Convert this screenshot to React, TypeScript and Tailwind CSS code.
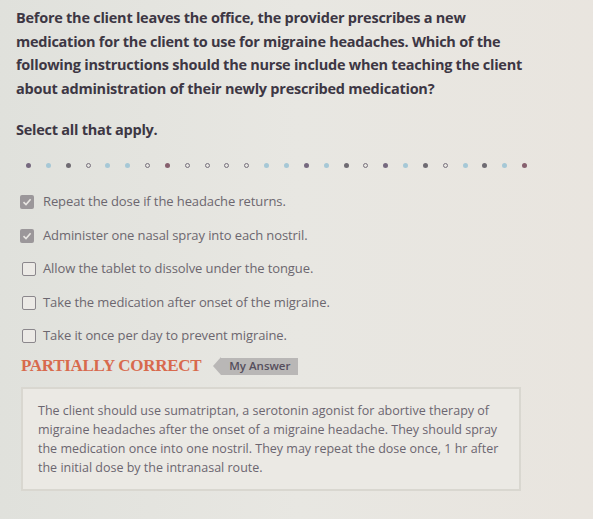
import React from "react";

const dots = [
  "fill-p", "blue", "fill-g", "ring", "blue", "blue", "ring", "fill-r", "ring", "ring",
  "ring", "ring", "blue", "blue", "fill-p", "blue", "fill-g", "ring", "fill-p", "blue",
  "fill-g", "ring", "blue", "fill-g", "blue", "fill-r",
];

const options = [
  { text: "Repeat the dose if the headache returns.", checked: true },
  { text: "Administer one nasal spray into each nostril.", checked: true },
  { text: "Allow the tablet to dissolve under the tongue.", checked: false },
  { text: "Take the medication after onset of the migraine.", checked: false },
  { text: "Take it once per day to prevent migraine.", checked: false },
];

const Dot = ({ kind }: { kind: string }) => {
  if (kind === "blue") return <span className="w-[5px] h-[5px] rounded-full bg-[#a6c8d6]"></span>;
  if (kind === "ring") return <span className="w-[5px] h-[5px] rounded-full border-[1.5px] border-[#77707c]"></span>;
  if (kind === "fill-r") return <span className="w-[5px] h-[5px] rounded-full bg-[#86606e]"></span>;
  if (kind === "fill-p") return <span className="w-[5px] h-[5px] rounded-full bg-[#76697f]"></span>;
  return <span className="w-[5px] h-[5px] rounded-full bg-[#6f6b72]"></span>;
};

const App = () => {
  return (
    <div
      className="w-[593px] h-[519px] overflow-hidden bg-gradient-to-r from-[#e0e1dc] via-[#e8e7e2] to-[#e9e5df]"
      style={{ fontFamily: '"Open Sans", "Liberation Sans", sans-serif' }}
    >
      <div className="pl-4 pt-[6px]">
        <p className="text-[14.5px] leading-[23.5px] font-bold tracking-[-0.25px] text-[#3d3744] whitespace-nowrap">
          Before the client leaves the office, the provider prescribes a new
          <br />
          medication for the client to use for migraine headaches. Which of the
          <br />
          following instructions should the nurse include when teaching the client
          <br />
          about administration of their newly prescribed medication?
        </p>
        <p className="mt-[18px] text-[14.5px] leading-[23px] font-bold tracking-[-0.25px] text-[#3d3744]">Select all that apply.</p>
      </div>

      <div className="flex items-center gap-[14.85px] pl-[26px] mt-[19px] h-[10px]">
        {dots.map((d, i) => (
          <Dot key={i} kind={d} />
        ))}
      </div>

      <div className="flex flex-col pl-[20px] mt-[23px] gap-[15.5px]">
        {options.map((o, i) => (
          <div key={i} className="flex items-center gap-[9px] h-[18px]">
            {o.checked ? (
              <span className="w-[14px] h-[14px] rounded-[2px] bg-[#9b979a] flex items-center justify-center">
                <svg width="10" height="10" viewBox="0 0 10 10">
                  <path d="M1.5 5.2 L4 7.6 L8.6 2.3" stroke="#e8e6e2" strokeWidth="1.6" fill="none" />
                </svg>
              </span>
            ) : (
              <span className="w-[14px] h-[14px] rounded-[2px] border border-[#8b878c] bg-[#eceae6] ml-[2px]"></span>
            )}
            <span className={`text-[13px] tracking-[-0.1px] text-[#6c676f] ${o.checked ? "" : "ml-[-2px]"}`}>{o.text}</span>
          </div>
        ))}
      </div>

      <div className="flex items-center pl-[21px] mt-[11px] h-[20px]">
        <span
          className="text-[17px] font-bold text-[#d86a4d] tracking-[-0.3px]"
          style={{ fontFamily: '"Liberation Serif", serif' }}
        >
          PARTIALLY CORRECT
        </span>
        <div className="flex items-center ml-[12px]">
          <svg width="8" height="18" viewBox="0 0 8 18">
            <path d="M8 0 L0 9 L8 18 Z" fill="#b9b7b6" />
          </svg>
          <span className="bg-[#b9b7b6] h-[17px] px-[8px] flex items-center text-[11.5px] font-semibold text-[#554e5c]">
            My Answer
          </span>
        </div>
      </div>

      <div className="ml-[21px] mt-[11px] w-[500px] border-2 border-[#d9d7d0] bg-[#ebe9e4] pl-[15px] pr-[4px] pt-[12px] pb-[12px]">
        <p className="text-[12.5px] leading-[19px] text-[#6b6670] whitespace-nowrap">
          The client should use sumatriptan, a serotonin agonist for abortive therapy of
          <br />
          migraine headaches after the onset of a migraine headache. They should spray
          <br />
          the medication once into one nostril. They may repeat the dose once, 1 hr after
          <br />
          the initial dose by the intranasal route.
        </p>
      </div>
    </div>
  );
};

export default App;
